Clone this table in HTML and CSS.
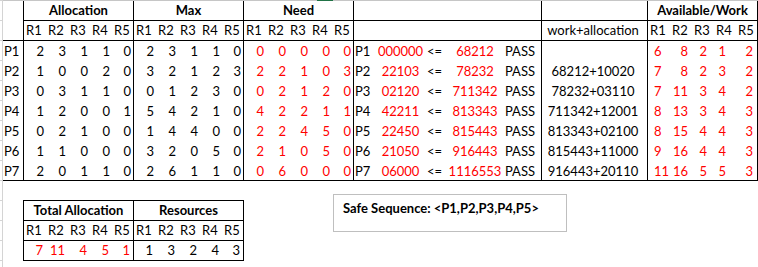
FILE: index.html
```html
<!DOCTYPE html>
<html>
<head>
<meta charset="utf-8">
<link rel="stylesheet" href="styles.css">
</head>
<body>
<div class="sheet">
  <div class="gutter"></div>
  <div class="area">
    <div class="main">
      <div class="grp ga">
        <div class="hd2"></div>
        <div class="data">
          <div class="row plab">P1</div>
          <div class="row plab">P2</div>
          <div class="row plab">P3</div>
          <div class="row plab">P4</div>
          <div class="row plab">P5</div>
          <div class="row plab">P6</div>
          <div class="row plab">P7</div>
        </div>
      </div>
      <div class="grp g110">
        <div class="hd">Allocation</div>
        <div class="sub"><span class="c">R1</span><span class="c">R2</span><span class="c">R3</span><span class="c">R4</span><span class="c">R5</span></div>
        <div class="data">
          <div class="row"><span class="c">2</span><span class="c">3</span><span class="c">1</span><span class="c">1</span><span class="c">0</span></div>
          <div class="row"><span class="c">1</span><span class="c">0</span><span class="c">0</span><span class="c">2</span><span class="c">0</span></div>
          <div class="row"><span class="c">0</span><span class="c">3</span><span class="c">1</span><span class="c">1</span><span class="c">0</span></div>
          <div class="row"><span class="c">1</span><span class="c">2</span><span class="c">0</span><span class="c">0</span><span class="c">1</span></div>
          <div class="row"><span class="c">0</span><span class="c">2</span><span class="c">1</span><span class="c">0</span><span class="c">0</span></div>
          <div class="row"><span class="c">1</span><span class="c">1</span><span class="c">0</span><span class="c">0</span><span class="c">0</span></div>
          <div class="row"><span class="c">2</span><span class="c">0</span><span class="c">1</span><span class="c">1</span><span class="c">0</span></div>
        </div>
      </div>
      <div class="grp g110">
        <div class="hd">Max</div>
        <div class="sub"><span class="c">R1</span><span class="c">R2</span><span class="c">R3</span><span class="c">R4</span><span class="c">R5</span></div>
        <div class="data">
          <div class="row"><span class="c">2</span><span class="c">3</span><span class="c">1</span><span class="c">1</span><span class="c">0</span></div>
          <div class="row"><span class="c">3</span><span class="c">2</span><span class="c">1</span><span class="c">2</span><span class="c">3</span></div>
          <div class="row"><span class="c">0</span><span class="c">1</span><span class="c">2</span><span class="c">3</span><span class="c">0</span></div>
          <div class="row"><span class="c">5</span><span class="c">4</span><span class="c">2</span><span class="c">1</span><span class="c">0</span></div>
          <div class="row"><span class="c">1</span><span class="c">4</span><span class="c">4</span><span class="c">0</span><span class="c">0</span></div>
          <div class="row"><span class="c">3</span><span class="c">2</span><span class="c">0</span><span class="c">5</span><span class="c">0</span></div>
          <div class="row"><span class="c">2</span><span class="c">6</span><span class="c">1</span><span class="c">1</span><span class="c">0</span></div>
        </div>
      </div>
      <div class="grp g110">
        <div class="hd">Need</div>
        <div class="sub"><span class="c">R1</span><span class="c">R2</span><span class="c">R3</span><span class="c">R4</span><span class="c">R5</span></div>
        <div class="data red">
          <div class="row"><span class="c">0</span><span class="c">0</span><span class="c">0</span><span class="c">0</span><span class="c">0</span></div>
          <div class="row"><span class="c">2</span><span class="c">2</span><span class="c">1</span><span class="c">0</span><span class="c">3</span></div>
          <div class="row"><span class="c">0</span><span class="c">2</span><span class="c">1</span><span class="c">2</span><span class="c">0</span></div>
          <div class="row"><span class="c">4</span><span class="c">2</span><span class="c">2</span><span class="c">1</span><span class="c">1</span></div>
          <div class="row"><span class="c">2</span><span class="c">2</span><span class="c">4</span><span class="c">5</span><span class="c">0</span></div>
          <div class="row"><span class="c">2</span><span class="c">1</span><span class="c">0</span><span class="c">5</span><span class="c">0</span></div>
          <div class="row"><span class="c">0</span><span class="c">6</span><span class="c">0</span><span class="c">0</span><span class="c">0</span></div>
        </div>
      </div>
      <div class="grp gchk">
        <div class="hd"></div>
        <div class="sub"></div>
        <div class="data">
          <div class="row"><span class="k-p">P1</span><span class="k-v red">000000</span><span class="k-le">&lt;=</span><span class="k-w red">68212</span><span class="k-s">PASS</span></div>
          <div class="row"><span class="k-p">P2</span><span class="k-v red">22103</span><span class="k-le">&lt;=</span><span class="k-w red">78232</span><span class="k-s">PASS</span></div>
          <div class="row"><span class="k-p">P3</span><span class="k-v red">02120</span><span class="k-le">&lt;=</span><span class="k-w red">711342</span><span class="k-s">PASS</span></div>
          <div class="row"><span class="k-p">P4</span><span class="k-v red">42211</span><span class="k-le">&lt;=</span><span class="k-w red">813343</span><span class="k-s">PASS</span></div>
          <div class="row"><span class="k-p">P5</span><span class="k-v red">22450</span><span class="k-le">&lt;=</span><span class="k-w red">815443</span><span class="k-s">PASS</span></div>
          <div class="row"><span class="k-p">P6</span><span class="k-v red">21050</span><span class="k-le">&lt;=</span><span class="k-w red">916443</span><span class="k-s">PASS</span></div>
          <div class="row"><span class="k-p">P7</span><span class="k-v red">06000</span><span class="k-le">&lt;=</span><span class="k-w red">1116553</span><span class="k-s">PASS</span></div>
        </div>
      </div>
      <div class="grp gwork">
        <div class="hd"></div>
        <div class="sub center">work+allocation</div>
        <div class="data">
          <div class="row center"></div>
          <div class="row center">68212+10020</div>
          <div class="row center">78232+03110</div>
          <div class="row center">711342+12001</div>
          <div class="row center">813343+02100</div>
          <div class="row center">815443+11000</div>
          <div class="row center">916443+20110</div>
        </div>
      </div>
      <div class="grp g110 gav">
        <div class="hd">Available/Work</div>
        <div class="sub"><span class="c">R1</span><span class="c">R2</span><span class="c">R3</span><span class="c">R4</span><span class="c">R5</span></div>
        <div class="data red">
          <div class="row"><span class="c">6</span><span class="c">8</span><span class="c">2</span><span class="c">1</span><span class="c">2</span></div>
          <div class="row"><span class="c">7</span><span class="c">8</span><span class="c">2</span><span class="c">3</span><span class="c">2</span></div>
          <div class="row"><span class="c">7</span><span class="c">11</span><span class="c">3</span><span class="c">4</span><span class="c">2</span></div>
          <div class="row"><span class="c">8</span><span class="c">13</span><span class="c">3</span><span class="c">4</span><span class="c">3</span></div>
          <div class="row"><span class="c">8</span><span class="c">15</span><span class="c">4</span><span class="c">4</span><span class="c">3</span></div>
          <div class="row"><span class="c">9</span><span class="c">16</span><span class="c">4</span><span class="c">4</span><span class="c">3</span></div>
          <div class="row"><span class="c">11</span><span class="c">16</span><span class="c">5</span><span class="c">5</span><span class="c">3</span></div>
        </div>
      </div>
    </div>
    <div class="lower">
      <div class="lg">
        <div class="hd">Total Allocation</div>
        <div class="sub"><span class="c">R1</span><span class="c">R2</span><span class="c">R3</span><span class="c">R4</span><span class="c">R5</span></div>
        <div class="vals red"><span class="c">7</span><span class="c">11</span><span class="c">4</span><span class="c">5</span><span class="c">1</span></div>
      </div>
      <div class="lg">
        <div class="hd">Resources</div>
        <div class="sub"><span class="c">R1</span><span class="c">R2</span><span class="c">R3</span><span class="c">R4</span><span class="c">R5</span></div>
        <div class="vals"><span class="c">1</span><span class="c">3</span><span class="c">2</span><span class="c">4</span><span class="c">3</span></div>
      </div>
    </div>
  </div>
  <div class="selmark"></div>
  <div class="textbox">Safe Sequence: &lt;P1,P2,P3,P4,P5&gt;</div>
</div>
</body>
</html>
```

FILE: styles.css
```css
html, body {
  margin: 0;
  padding: 0;
  background: #ffffff;
}

body {
  font-family: Lato, "Liberation Sans", sans-serif;
  font-size: 13px;
  color: #000000;
}

.sheet {
  position: relative;
  display: flex;
  width: 758px;
  height: 267px;
  overflow: hidden;
}

.gutter {
  width: 2px;
  border-right: 1px solid #d4d4d4;
  background: repeating-linear-gradient(to bottom, #d4d4d4 0 1px, transparent 1px 20px);
}

.area {
  width: 755px;
  border-top: 1px solid #c6c6c6;
}

.main {
  display: flex;
}

.grp {
  display: flex;
  flex-direction: column;
  box-sizing: border-box;
  border-right: 1px solid #000000;
}

.ga { width: 21px; }
.g110 { width: 110px; }
.gchk { width: 188px; }
.gwork { width: 106px; }

.hd2 {
  height: 39px;
  border-bottom: 1px solid #000000;
}

.hd {
  height: 19px;
  line-height: 19px;
  border-bottom: 1px solid #000000;
  font-weight: bold;
  text-align: center;
  white-space: nowrap;
}

.sub {
  display: flex;
  height: 19px;
  line-height: 19px;
  border-bottom: 1px solid #000000;
  white-space: nowrap;
}

.data {
  height: 139px;
  border-bottom: 1px solid #000000;
}

.row {
  display: flex;
  height: 20px;
  line-height: 21px;
  white-space: nowrap;
}

.row:last-child {
  height: 19px;
}

.c {
  display: block;
  width: 22px;
  box-sizing: border-box;
  text-align: right;
  padding-right: 2px;
}

.c:last-child {
  width: 21px;
}

.sub .c {
  text-align: left;
  padding-left: 2px;
  padding-right: 0;
}

.red { color: #ff0000; }

.center {
  justify-content: center;
  padding-right: 3px;
}

.plab {
  padding-left: 1px;
}

/* check column */
.k-p { width: 22px; padding-left: 1px; box-sizing: border-box; color: #000; }
.k-v { display: flex; justify-content: center; width: 49px; }
.k-le { width: 29px; padding-left: 2px; box-sizing: border-box; }
.k-w { display: flex; justify-content: center; width: 42px; }
.k-s { width: 45px; padding-left: 3px; box-sizing: border-box; text-align: center; }

/* available/work columns */
.gav .data .c:nth-child(1) { text-align: left; padding-left: 6px; padding-right: 0; }
.gav .data .c:nth-child(2) { padding-right: 4px; }
.gav .data .c:nth-child(3) { padding-right: 7px; }
.gav .data .c:nth-child(4) { padding-right: 10px; }
.gav .data .c:nth-child(5) { padding-right: 4px; }

/* lower table */
.lower {
  display: flex;
  width: max-content;
  margin: 19px 0 0 20px;
  border-top: 1px solid #000000;
  border-left: 1px solid #000000;
}

.lg {
  width: 110px;
  box-sizing: border-box;
  border-right: 1px solid #000000;
}

.vals {
  display: flex;
  height: 19px;
  line-height: 18px;
  border-bottom: 1px solid #000000;
}

.vals .c {
  padding-right: 3px;
}

.selmark {
  position: absolute;
  left: 317px;
  top: 0;
  width: 16px;
  height: 1px;
  background: #217346;
}

.textbox {
  position: absolute;
  left: 333px;
  top: 194px;
  width: 234px;
  height: 38px;
  box-sizing: border-box;
  border: 1px solid #bfbfbf;
  background: #ffffff;
  padding: 4px 0 0 9px;
  line-height: 19px;
  font-weight: bold;
  white-space: nowrap;
}
```
